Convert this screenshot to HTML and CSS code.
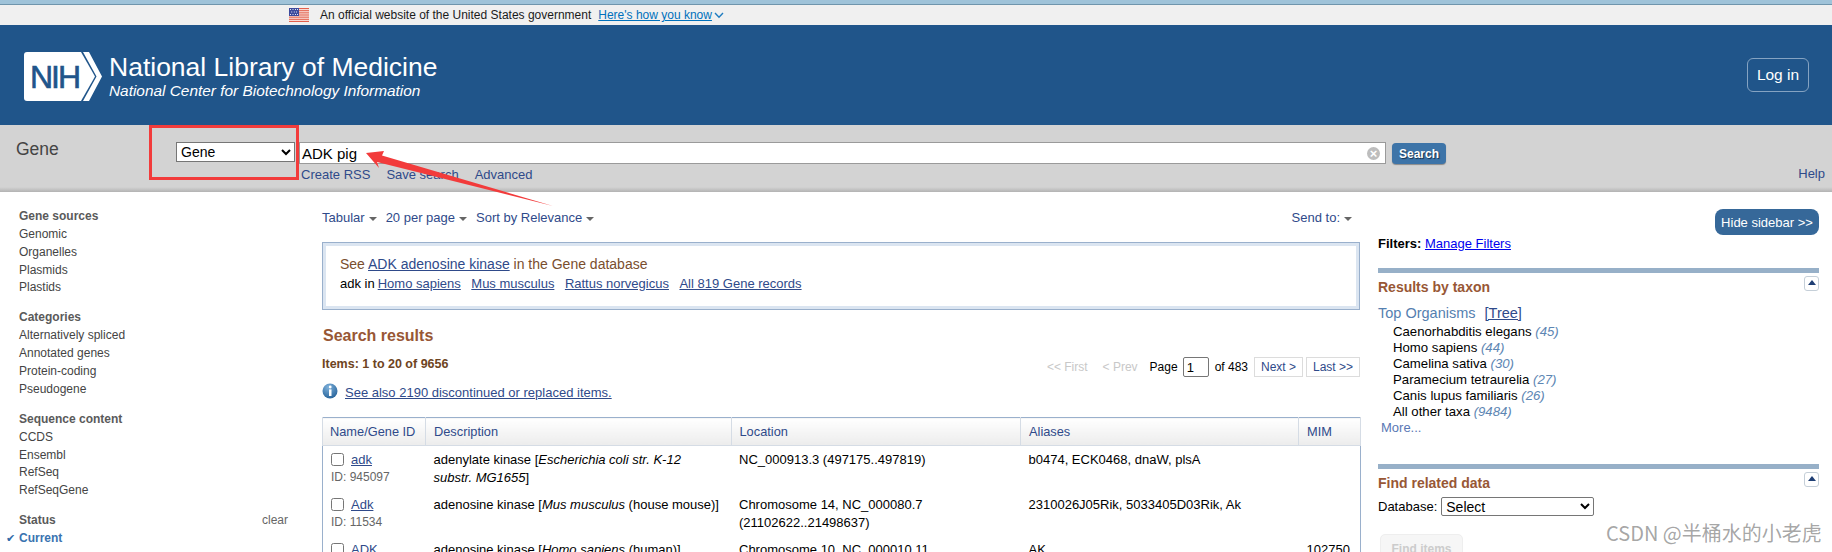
FILE: index.html
```html
<!DOCTYPE html>
<html lang="en">
<head>
<meta charset="utf-8">
<title>ADK pig - Gene - NCBI</title>
<link rel="stylesheet" href="styles.css">
</head>
<body>
<div class="page">
  <div class="top-strip"></div>
  <div class="gov-banner">
    <svg class="flag" viewBox="0 0 20 14" width="20" height="14" aria-hidden="true">
      <rect width="20" height="14" fill="#fbe9e4"/>
      <g fill="#e2604c"><rect y="0" width="20" height="1.1"/><rect y="2.15" width="20" height="1.1"/><rect y="4.3" width="20" height="1.1"/><rect y="6.45" width="20" height="1.1"/><rect y="8.6" width="20" height="1.1"/><rect y="10.75" width="20" height="1.1"/><rect y="12.9" width="20" height="1.1"/></g>
      <rect width="10" height="8" fill="#3c4a9c"/>
      <g fill="#dfe3f2"><rect x="1" y="1" width="1" height="1"/><rect x="3.5" y="1" width="1" height="1"/><rect x="6" y="1" width="1" height="1"/><rect x="8" y="1" width="1" height="1"/><rect x="2.2" y="3.5" width="1" height="1"/><rect x="4.8" y="3.5" width="1" height="1"/><rect x="7" y="3.5" width="1" height="1"/><rect x="1" y="6" width="1" height="1"/><rect x="3.5" y="6" width="1" height="1"/><rect x="6" y="6" width="1" height="1"/><rect x="8" y="6" width="1" height="1"/></g>
    </svg>
    <span class="gov-text">An official website of the United States government</span>
    <a class="gov-link" href="#">Here's how you know</a>
    <svg class="gov-chevron" viewBox="0 0 10 7" width="10" height="7" aria-hidden="true"><path d="M1 1l4 4.2L9 1" fill="none" stroke="#1f7cc0" stroke-width="1.4"/></svg>
  </div>

  <header class="site-header">
    <svg class="nih-logo" viewBox="0 0 78 49" width="78" height="49" role="img" aria-label="NIH">
      <path d="M3 0H57L71 24.5L57 49H3Q0 49 0 46V3Q0 0 3 0Z" fill="#fff"/>
      <path d="M59 0H65L78 24.5L65 49H59L72.5 24.5Z" fill="#fff"/>
      <text class="nih-text" x="6" y="36">NIH</text>
    </svg>
    <div class="brand">
      <div class="brand-title">National Library of Medicine</div>
      <div class="brand-sub">National Center for Biotechnology Information</div>
    </div>
    <a class="login" href="#">Log in</a>
  </header>

  <section class="search-bar">
    <div class="db-title">Gene</div>
    <div class="search-form">
      <div class="search-row">
        <select class="db-select"><option>Gene</option></select>
        <div class="term-box">
          <span class="term-text">ADK pig</span>
          <span class="term-clear">×</span>
        </div>
        <button class="search-btn" type="button">Search</button>
      </div>
      <div class="search-links">
        <a href="#">Create RSS</a><a href="#">Save search</a><a href="#">Advanced</a>
      </div>
    </div>
    <a class="help" href="#">Help</a>
  </section>

  <main class="layout">
    <nav class="facets">
      <div class="facet">
        <h3>Gene sources</h3>
        <ul><li>Genomic</li><li>Organelles</li><li>Plasmids</li><li>Plastids</li></ul>
      </div>
      <div class="facet">
        <h3>Categories</h3>
        <ul><li>Alternatively spliced</li><li>Annotated genes</li><li>Protein-coding</li><li>Pseudogene</li></ul>
      </div>
      <div class="facet">
        <h3>Sequence content</h3>
        <ul><li>CCDS</li><li>Ensembl</li><li>RefSeq</li><li>RefSeqGene</li></ul>
      </div>
      <div class="facet">
        <h3 class="facet-clear"><span>Status</span><a href="#">clear</a></h3>
        <ul><li class="checked">Current</li></ul>
      </div>
    </nav>

    <div class="results">
      <div class="toolbar">
        <div class="toolbar-left">
          <span class="menu">Tabular</span>
          <span class="menu">20 per page</span>
          <span class="menu">Sort by Relevance</span>
        </div>
        <span class="menu">Send to:</span>
      </div>

      <div class="sensor">
        <div class="sensor-title">See <a href="#">ADK adenosine kinase</a> in the Gene database</div>
        <div class="sensor-links"><span class="sensor-term">adk in</span> <a href="#">Homo sapiens</a><a href="#">Mus musculus</a><a href="#">Rattus norvegicus</a><a href="#">All 819 Gene records</a></div>
      </div>

      <h2 class="results-title">Search results</h2>
      <div class="results-meta">
        <div class="items-count">Items: 1 to 20 of 9656</div>
        <div class="pager">
          <span class="pager-off">&lt;&lt; First</span>
          <span class="pager-off pager-prev">&lt; Prev</span>
          <span class="pager-page">Page</span>
          <input class="pager-input" type="text" value="1">
          <span class="pager-of">of 483</span>
          <a class="pager-btn pager-next" href="#">Next &gt;</a>
          <a class="pager-btn pager-last" href="#">Last &gt;&gt;</a>
        </div>
      </div>
      <div class="see-also">
        <svg class="info-icon" viewBox="0 0 16 16" width="16" height="16" aria-hidden="true">
          <defs><radialGradient id="ig" cx="0.4" cy="0.25" r="0.85"><stop offset="0" stop-color="#7fb2dc"/><stop offset="1" stop-color="#1f5c94"/></radialGradient></defs>
          <circle cx="8" cy="8" r="7.5" fill="url(#ig)"/>
          <circle cx="8.2" cy="4" r="1.4" fill="#fff"/>
          <rect x="7" y="6.4" width="2.5" height="6.6" fill="#fff"/>
        </svg>
        <a href="#">See also 2190 discontinued or replaced items.</a>
      </div>

      <table class="gene-table">
        <colgroup><col class="col-name"><col class="col-desc"><col class="col-loc"><col class="col-alias"><col class="col-mim"></colgroup>
        <thead>
          <tr><th>Name/Gene ID</th><th>Description</th><th>Location</th><th>Aliases</th><th>MIM</th></tr>
        </thead>
        <tbody>
          <tr>
            <td><input class="row-check" type="checkbox"><a href="#">adk</a><div class="gene-id">ID: 945097</div></td>
            <td>adenylate kinase [<i>Escherichia coli str. K-12 substr. MG1655</i>]</td>
            <td>NC_000913.3 (497175..497819)</td>
            <td>b0474, ECK0468, dnaW, plsA</td>
            <td></td>
          </tr>
          <tr>
            <td><input class="row-check" type="checkbox"><a href="#">Adk</a><div class="gene-id">ID: 11534</div></td>
            <td>adenosine kinase [<i>Mus musculus</i> (house mouse)]</td>
            <td>Chromosome 14, NC_000080.7 (21102622..21498637)</td>
            <td>2310026J05Rik, 5033405D03Rik, Ak</td>
            <td></td>
          </tr>
          <tr>
            <td><input class="row-check" type="checkbox"><a href="#">ADK</a><div class="gene-id">ID: 132</div></td>
            <td>adenosine kinase [<i>Homo sapiens</i> (human)]</td>
            <td>Chromosome 10, NC_000010.11</td>
            <td>AK</td>
            <td>102750</td>
          </tr>
        </tbody>
      </table>
    </div>

    <aside class="sidebar">
      <div class="hide-row"><a class="hide-btn" href="#">Hide sidebar &gt;&gt;</a></div>
      <div class="filters"><b>Filters:</b> <a href="#">Manage Filters</a></div>

      <section class="portlet">
        <div class="portlet-head">
          <h3>Results by taxon</h3>
          <span class="toggle"></span>
        </div>
        <div class="organisms-title">Top Organisms <a href="#">[Tree]</a></div>
        <ul class="organisms">
          <li>Caenorhabditis elegans <i>(45)</i></li>
          <li>Homo sapiens <i>(44)</i></li>
          <li>Camelina sativa <i>(30)</i></li>
          <li>Paramecium tetraurelia <i>(27)</i></li>
          <li>Canis lupus familiaris <i>(26)</i></li>
          <li>All other taxa <i>(9484)</i></li>
        </ul>
        <a class="more" href="#">More...</a>
      </section>

      <section class="portlet portlet-related">
        <div class="portlet-head">
          <h3>Find related data</h3>
          <span class="toggle"></span>
        </div>
        <div class="database-row">
          <label class="database-label">Database:</label>
          <select class="database-select"><option>Select</option></select>
        </div>
        <button class="find-btn" type="button" disabled>Find items</button>
      </section>
    </aside>
  </main>

  <div class="mark-rect"></div>
  <svg class="mark-arrow" viewBox="0 0 190 62" width="190" height="62" aria-hidden="true">
    <path d="M0 6L18 4L16 8.5L187 59L11 15L13 21Z" fill="#f23b3b"/>
  </svg>
  <div class="watermark">CSDN @半桶水的小老虎</div>
</div>
</body>
</html>
```
FILE: styles.css
```css
* { box-sizing: border-box; }
html, body { margin: 0; padding: 0; background: #fff; }
body { font-family: "Liberation Sans", Arial, sans-serif; font-size: 12px; color: #000; }
a { color: #2f4a8a; text-decoration: none; }
ul { list-style: none; margin: 0; padding: 0; }
h2, h3 { margin: 0; }

.page { position: relative; width: 1832px; height: 552px; overflow: hidden; }

.top-strip { height: 5px; background: #9fc3d9; border-bottom: 1px solid #6f95ac; }

.gov-banner { height: 20px; background: #f0f0f0; display: flex; align-items: center; padding-left: 289px; font-size: 12px; }
.flag { margin-right: 11px; }
.gov-text { color: #1b1b1b; margin-right: 7px; }
.gov-link { color: #0071bc; text-decoration: underline; }
.gov-chevron { margin-left: 2px; }

.site-header { height: 100px; background: #20558a; display: flex; align-items: center; padding: 2px 23px 0 24px; color: #fff; }
.nih-logo { display: block; flex: none; }
.nih-text { font-family: "Liberation Sans", Arial, sans-serif; font-size: 32px; fill: #20558a; stroke: #20558a; stroke-width: 0.6px; letter-spacing: -2px; }
.brand { margin-left: 7px; }
.brand-title { font-size: 26.5px; line-height: 30px; }
.brand-sub { font-size: 15.4px; line-height: 18px; font-style: italic; }
.login { margin-left: auto; width: 62px; height: 34px; border: 1px solid #85a3c2; border-radius: 6px; color: #fff; font-size: 15.5px; display: flex; align-items: center; justify-content: center; margin-top: -3px; }

.search-bar { height: 67px; background: linear-gradient(#d3d3d3 0, #d3d3d3 62px, #b3b3b3 67px); display: flex; padding-left: 16px; position: relative; }
.db-title { width: 160px; font-size: 17.5px; line-height: 20px; color: #444; padding-top: 14px; }
.search-form { padding-top: 17px; }
.search-row { display: flex; align-items: flex-start; }
.db-select { width: 119px; height: 20px; font: 14px "Liberation Sans", Arial, sans-serif; background: #fff; border: 1px solid #767676; border-radius: 0; padding: 0; margin-right: 4px; color: #000; }
.term-box { width: 1087px; height: 22px; background: #fff; border: 1px solid #9a9a9a; display: flex; align-items: center; justify-content: space-between; padding: 0 5px 0 2px; }
.term-text { font-size: 15px; }
.term-clear { width: 13px; height: 13px; border-radius: 50%; background: #bdbdbd; color: #fff; font-size: 13px; font-weight: bold; line-height: 13px; text-align: center; }
.search-btn { margin: 1px 0 0 6px; width: 54px; height: 21px; background: #3d74a8; border: 0; border-radius: 4px; color: #fff; font: bold 12px "Liberation Sans", Arial, sans-serif; text-shadow: 1px 1px 1px #15304d; box-shadow: 0 1px 1px #8a8a8a; padding: 0; }
.search-links { display: flex; gap: 16px; padding: 3px 0 0 125px; margin-left: 0; font-size: 13px; line-height: 16px; }
.help { margin-left: auto; margin-right: 7px; font-size: 13px; line-height: 16px; margin-top: 41px; height: 16px; }

.layout { display: flex; align-items: flex-start; }

.facets { width: 322px; flex: none; padding: 15px 34px 0 19px; }
.facet { margin-bottom: 11.4px; }
.facet h3 { font-size: 12px; line-height: 19px; font-weight: bold; color: #5a5a5a; }
.facet li { line-height: 17.75px; color: #444; }
.facet-clear { display: flex; justify-content: space-between; }
.facet-clear a { font-weight: normal; color: #666; }
.checked { position: relative; color: #3a73b0 !important; font-weight: bold; }
.checked::before { content: "✔"; position: absolute; left: -13px; font-size: 11px; color: #2f6aa8; font-weight: normal; font-family: "DejaVu Sans", sans-serif; }

.results { width: 1038px; flex: none; padding-top: 17px; }
.toolbar { display: flex; justify-content: space-between; align-items: center; height: 18px; padding-right: 8px; }
.toolbar-left { display: flex; gap: 9px; }
.menu { color: #2f4a8a; font-size: 13px; line-height: 18px; white-space: nowrap; display: inline-flex; align-items: center; }
.menu::after { content: ""; margin: 2px 0 0 4px; border: 4px solid transparent; border-top: 4px solid #666; border-bottom: 0; }

.sensor { margin-top: 15px; height: 68px; border: 1px solid #9ab0cc; box-shadow: inset 0 0 0 3px #dbe5f1; padding: 11px 17px 0; }
.sensor-title { font-size: 14px; line-height: 20px; color: #7a4e2e; }
.sensor-title a { text-decoration: underline; color: #2f4a8a; }
.sensor-links { font-size: 13px; line-height: 20px; display: flex; }
.sensor-links a { text-decoration: underline; margin-right: 10.5px; }
.sensor-term { margin-right: 3px; }

.results-title { margin-top: 16px; padding-left: 1px; font-size: 16px; line-height: 20px; font-weight: bold; color: #985735; }
.results-meta { margin-top: 8px; height: 24px; display: flex; justify-content: space-between; }
.items-count { font-size: 12.5px; line-height: 20px; font-weight: bold; color: #6e4422; }
.pager { display: flex; align-items: center; height: 20px; margin-top: 3px; font-size: 12px; }
.pager-off { color: #c8c8c8; }
.pager-prev { margin-left: 15px; }
.pager-page { margin-left: 12px; }
.pager-input { width: 26px; height: 20px; margin: 0 6px 0 5px; border: 1px solid #767676; border-radius: 2px; padding: 0 3px; font: 13px "Liberation Sans", Arial, sans-serif; }
.pager-btn { height: 20px; border: 1px solid #dcdcdc; display: flex; align-items: center; justify-content: center; }
.pager-next { width: 49px; margin-left: 6px; }
.pager-last { width: 54px; margin-left: 3px; }

.see-also { margin-top: 5px; height: 18px; display: flex; align-items: center; gap: 7px; }
.see-also a { font-size: 13px; text-decoration: underline; }
.info-icon { flex: none; margin-top: -2px; }

.gene-table { margin-top: 16px; width: 1038px; table-layout: fixed; border-collapse: collapse; border: 1px solid #9ab0cc; }
.col-name { width: 103px; }
.col-desc { width: 305.5px; }
.col-loc { width: 289.5px; }
.col-alias { width: 278px; }
.col-mim { width: 62px; }
.gene-table th { height: 28px; padding: 0 8px; text-align: left; font-size: 12.8px; font-weight: normal; color: #2f4a8a; background: linear-gradient(#fff, #ececec); border: 1px solid #d5dce5; border-top: 0; white-space: nowrap; }
.gene-table th:first-child { padding: 0 0 0 7px; }
.gene-table td { height: 44.5px; padding: 5px 10px 5px 8px; vertical-align: top; font-size: 13px; line-height: 17.5px; border: 0; }
.gene-table td a { font-size: 13px; text-decoration: underline; }
.row-check { width: 13px; height: 13px; margin: 2px 7px 0 0; vertical-align: top; }
.gene-id { color: #666; font-size: 12px; }

.sidebar { width: 441px; flex: none; margin-left: 18px; padding-top: 17px; }
.hide-row { display: flex; justify-content: flex-end; }
.hide-btn { width: 104px; height: 26px; border-radius: 8px; background: #366899; color: #fff; font-size: 13px; display: flex; align-items: center; justify-content: center; }
.filters { line-height: 18px; font-size: 13px; }
.filters a { color: #0000ee; text-decoration: underline; }

.portlet { margin-top: 15px; border-top: 5px solid #97b0c8; }
.portlet-related { margin-top: 28px; }
.portlet-head { display: flex; justify-content: space-between; align-items: flex-start; padding-top: 3px; }
.portlet-head h3 { margin-top: 3px; font-size: 14px; line-height: 16px; font-weight: bold; color: #985735; }
.toggle { width: 15px; height: 15px; border: 1px solid #c5cfd8; border-radius: 3px; position: relative; display: block; }
.toggle::after { content: ""; position: absolute; left: 2.5px; top: 3px; border: 4px solid transparent; border-bottom: 5px solid #1f3f74; border-top: 0; }
.organisms-title { margin-top: 9px; font-size: 14.5px; line-height: 18px; color: #5580b0; }
.organisms-title a { margin-left: 5px; text-decoration: underline; color: #2f4a8a; }
.organisms { margin-top: 2px; padding-left: 15px; }
.organisms li { font-size: 13.2px; line-height: 16px; }
.organisms i { color: #5d86b3; }
.more { display: block; margin-left: 3px; line-height: 16px; font-size: 13px; color: #5a78b4; }
.database-row { margin-top: 6px; display: flex; align-items: center; }
.database-label { font-size: 13px; margin-right: 4px; }
.database-select { width: 153px; height: 19px; font: 14px "Liberation Sans", Arial, sans-serif; background: #fff; border: 1px solid #767676; border-radius: 2px; padding: 0; color: #000; }
.find-btn { display: block; margin: 18px 0 0 2px; width: 83px; height: 30px; border: 1px solid #eee; border-radius: 5px; background: #f6f6f6; color: #ccc; font: bold 12px "Liberation Sans", Arial, sans-serif; }

.mark-rect { position: absolute; left: 149px; top: 125px; width: 150px; height: 55px; border: 3px solid #f23b3b; }
.mark-arrow { position: absolute; left: 366px; top: 147px; }
.watermark { position: absolute; left: 1606px; top: 521px; font-family: "Noto Sans CJK SC", "Liberation Sans", sans-serif; font-size: 20px; line-height: 24px; color: rgba(90, 90, 90, 0.55); white-space: nowrap; }
```
